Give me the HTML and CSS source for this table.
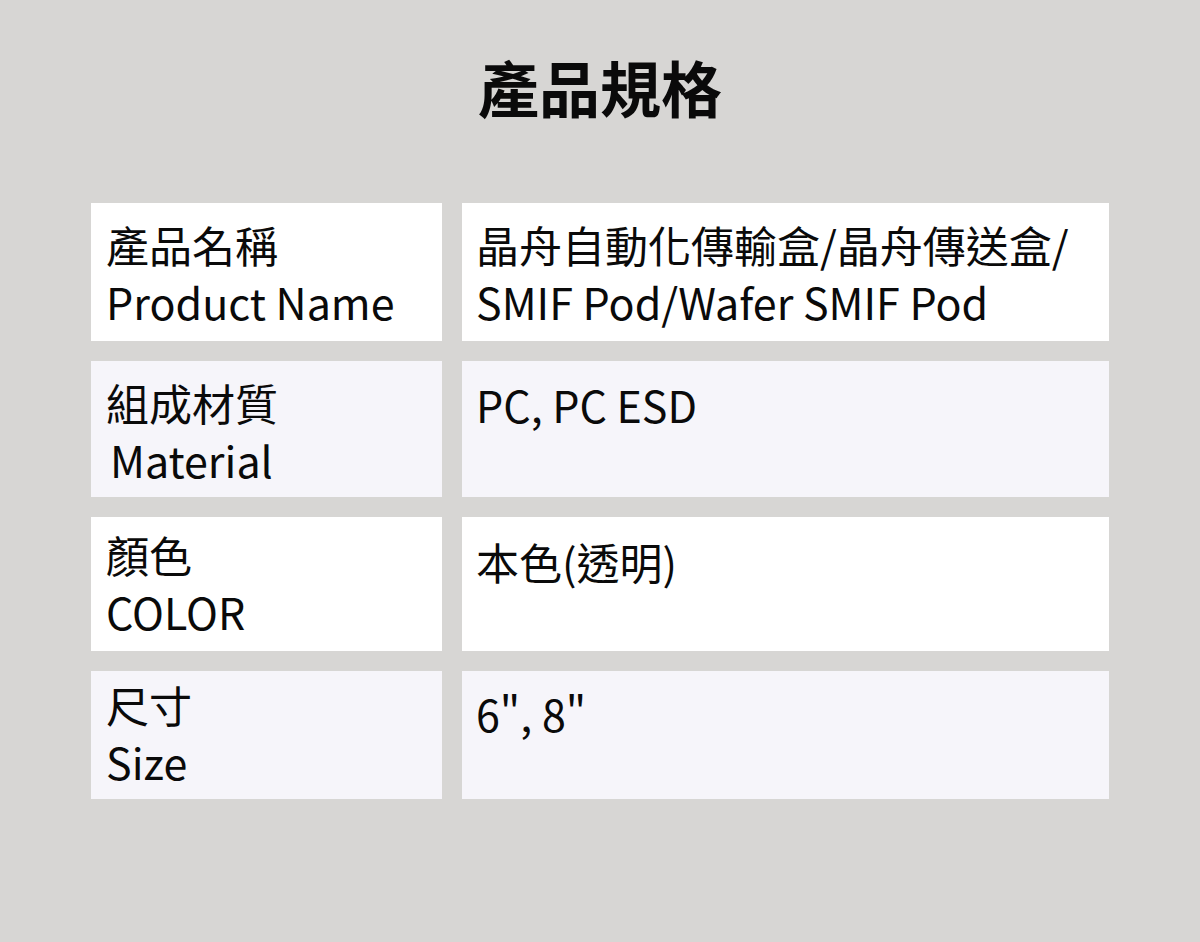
FILE: index.html
```html
<!DOCTYPE html>
<html lang="zh-Hant">
<head>
<meta charset="utf-8">
<title>產品規格</title>
<link rel="stylesheet" href="styles.css">
</head>
<body>
<main class="page">
  <h1 class="title">產品規格</h1>
  <section class="specs">
    <div class="row row--name">
      <div class="cell cell--label">產品名稱<br>Product Name</div>
      <div class="cell cell--value">晶舟自動化傳輸盒/晶舟傳送盒/<br>SMIF Pod/Wafer SMIF Pod</div>
    </div>
    <div class="row row--material row--alt">
      <div class="cell cell--label">組成材質<br><span class="indent">Material</span></div>
      <div class="cell cell--value">PC, PC ESD</div>
    </div>
    <div class="row row--color">
      <div class="cell cell--label">顏色<br>COLOR</div>
      <div class="cell cell--value">本色(透明)</div>
    </div>
    <div class="row row--size row--alt">
      <div class="cell cell--label">尺寸<br>Size</div>
      <div class="cell cell--value">6", 8"</div>
    </div>
  </section>
</main>
</body>
</html>
```

FILE: styles.css
```css
html, body {
  margin: 0;
  padding: 0;
}

body {
  background: #d7d6d4;
  font-family: "Noto Sans CJK TC", "Noto Sans CJK SC", sans-serif;
  color: #0a0a0a;
  width: 1200px;
  height: 942px;
  overflow: hidden;
}

.page {
  padding: 51px 91px 0;
}

.title {
  margin: 0;
  font-size: 61px;
  line-height: 72px;
  font-weight: 700;
  text-align: center;
  color: #0a0a0a;
}

.specs {
  margin-top: 80px;
  display: flex;
  flex-direction: column;
  gap: 20px;
}

.row {
  display: grid;
  grid-template-columns: 351px 647px;
  column-gap: 20px;
}

.cell {
  background: #ffffff;
  font-size: 43px;
  line-height: 57px;
  padding: 13px 16px 0 15px;
  box-sizing: border-box;
  white-space: nowrap;
}

.row--alt .cell {
  background: #f6f5fa;
}

.cell--value {
  padding-left: 14px;
}

.row--name { height: 138px; }
.row--material { height: 136px; }
.row--color { height: 134px; }
.row--size { height: 128px; }

.row--material .cell--value { padding-top: 15px; }
.row--color .cell--label { padding-top: 9px; }
.row--color .cell--value { padding-top: 16px; }
.row--size .cell--label { padding-top: 5px; }
.row--size .cell--value { padding-top: 14px; }

.indent {
  padding-left: 4px;
}
```
